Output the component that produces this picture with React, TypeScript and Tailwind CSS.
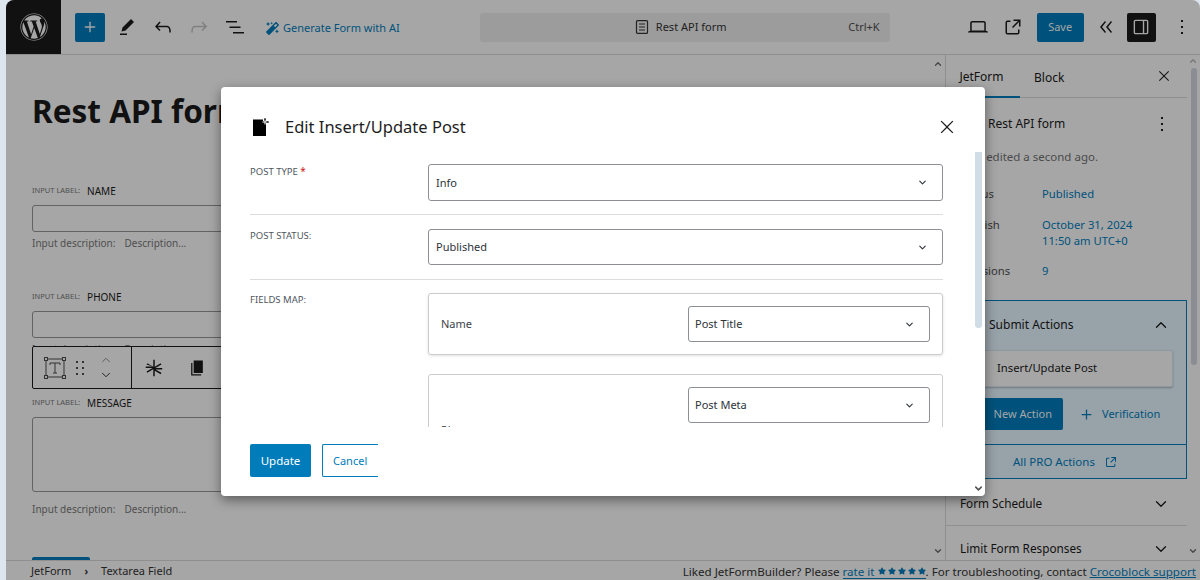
import React from "react";
import { FaWordpress, FaMagic, FaStar } from "react-icons/fa";
import { ChevronDown, ChevronUp, Plus } from "lucide-react";

type IconProps = { d: string; className?: string };

const WpIcon = ({ d, className }: IconProps) => (
  <svg viewBox="0 0 24 24" fill="currentColor" className={className}>
    <path d={d} />
  </svg>
);

const icons = {
  pencil: "m19 7-3-3-8.5 8.5-1 4 4-1L19 7Zm-7 11.5H5V20h7v-1.5Z",
  undo: "M18.3 11.7c-.6-.6-1.4-.9-2.3-.9H6.7l2.9-3.3-1.1-1-4.5 5L8.5 16l1-1-2.7-2.7H16c.5 0 .9.2 1.3.5 1 1 1 3.4 1 4.5v.3h1.5v-.2c0-1.5 0-4.3-1.5-5.7z",
  redo: "M15.6 6.5l-1.1 1 2.9 3.3H8c-.9 0-1.7.3-2.3.9-1.4 1.5-1.4 4.2-1.4 5.6v.2h1.5v-.3c0-1.1 0-3.5 1-4.5.3-.3.7-.5 1.3-.5h9.2L14.5 15l1.1 1.1 4.6-4.6-4.6-5z",
  list: "M3 6h11v1.5H3V6Zm3.5 5.5h11V13h-11v-1.5ZM21 17H10v1.5h11V17Z",
  laptop: "M20.5 16h-.7V8c0-1.1-.9-2-2-2H6.2c-1.1 0-2 .9-2 2v8h-.7c-.8 0-1.5.7-1.5 1.5h20c0-.8-.7-1.5-1.5-1.5zM5.700 8c0-.3.2-.5.5-.5h11.600c.3 0 .5.2.5.5v7.600H5.700V8z",
  external: "M19.5 4.5h-7V6h4.44l-5.97 5.97 1.06 1.06L18 7.06v4.44h1.5v-7Zm-13 1a2 2 0 0 0-2 2v10a2 2 0 0 0 2 2h10a2 2 0 0 0 2-2v-3H17v3a.5.5 0 0 1-.5.5h-10a.5.5 0 0 1-.5-.5v-10a.5.5 0 0 1 .5-.5h3V5.5h-3Z",
  drawer: "M18 4H6c-1.1 0-2 .9-2 2v12c0 1.1.9 2 2 2h12c1.1 0 2-.9 2-2V6c0-1.1-.9-2-2-2zm-4 14.5H6c-.3 0-.5-.2-.5-.5V6c0-.3.2-.5.5-.5h8v13zm4.500-.5c0 .3-.2.5-.5.5h-2.500v-13H18c.3 0 .5.2.5.5v12z",
  dots: "M13 19h-2v-2h2v2zm0-6h-2v-2h2v2zm0-6h-2V5h2v2z",
  close: "m13.06 12 6.47-6.47-1.06-1.06L12 10.94 5.53 4.47 4.47 5.53 10.94 12l-6.47 6.47 1.06 1.06L12 13.06l6.47 6.47 1.06-1.06L13.06 12Z",
  chevrons: "M11 6l-5 6 5 6 1-1-4-5 4-5-1-1Zm6 0l-5 6 5 6 1-1-4-5 4-5-1-1Z",
  copy: "M8 3h11v15H8V3ZM5 6h1.500v13.500H17V21H5V6Z",
  asterisk: "M11.200 3h1.600v7.600l6.500-3.700.8 1.400-6.500 3.700H21v1.600h-7.400l6.500 3.700-.8 1.400-6.500-3.700V21h-1.600v-7.600l-6.500 3.700-.8-1.400 6.500-3.700H3v-1.600h7.400L3.900 8.300l.8-1.400 6.500 3.700V3Z",
};

const Select = ({ value, small, short }: { value: string; small?: boolean; short?: boolean }) => (
  <div className={`flex items-center justify-between border border-[#8c8f94] rounded-[3px] bg-white text-[#2c3338] ${small ? "w-[242px] h-[36px] pl-[6px] pr-[14px]" : `${short ? "h-[36px]" : "h-[37px]"} pl-[7px] pr-[14px]`}`}>
    <span className="pt-[1px] text-[11px]">{value}</span>
    <ChevronDown size={11} strokeWidth={2.5} className="text-[#32373c]" />
  </div>
);

const Field = ({ label, tall, className }: { label: string; tall?: boolean; className?: string }) => (
  <div className={className}>
    <div className="flex items-center h-[12px] gap-[7px]">
      <span className="text-[7.5px] text-[#4e4e4e]">INPUT LABEL:</span>
      <span className="text-[10px] text-[#111]">{label}</span>
    </div>
    <div className={`mt-[8px] border border-[#636363] rounded-[3px] w-[860px] ${tall ? "h-[75px]" : "h-[27px]"}`} />
    <div className={`${tall ? "mt-[9px]" : "mt-[3px]"} flex items-center h-[16px] gap-[9px] text-[10px] text-[#4e4e4e]`}>
      <span>Input description:</span>
      <span>Description...</span>
    </div>
  </div>
);

const MetaRow = ({ label, value, value2, className }: { label: string; value: string; value2?: string; className?: string }) => (
  <div className={`flex text-[11.25px] leading-[16px] ${className ?? ""}`}>
    <span className="w-[81px] text-[#333]">{label}</span>
    <span className="text-[#00527c]">
      {value}
      {value2 && <br />}
      {value2}
    </span>
  </div>
);

const App = () => {
  return (
    <div className="relative w-[1200px] h-[580px] overflow-hidden bg-[#dde5ee] pl-[6px] font-['Noto_Sans',sans-serif]">
      <div className="flex flex-col h-full bg-[#a6a6a6] rounded-tl-[8px] rounded-tr-[8px] overflow-hidden">
        {/* top bar */}
        <header className="flex items-center h-[55px] shrink-0 border-b border-[#8f8f8f] text-[#111]">
          <div className="flex items-center justify-center w-[55px] h-[54px] bg-[#111] text-[#a6a6a6]">
            <FaWordpress size={28} />
          </div>
          <div className="flex items-center justify-center ml-[14px] w-[30px] h-[29px] rounded-[2px] bg-[#00527c] text-[#a6a6a6]">
            <Plus size={16} strokeWidth={2} />
          </div>
          <WpIcon d={icons.pencil} className="ml-[10px] w-[24px] h-[24px]" />
          <WpIcon d={icons.undo} className="ml-[12px] w-[24px] h-[24px]" />
          <WpIcon d={icons.redo} className="ml-[12px] w-[24px] h-[24px] text-[#808080]" />
          <WpIcon d={icons.list} className="ml-[12px] w-[24px] h-[24px]" />
          <div className="flex items-center ml-[19px] pt-[2px] text-[#00527c]">
            <FaMagic size={13} />
            <span className="ml-[4px] text-[11px]">Generate Form with AI</span>
          </div>
          <div className="relative flex items-center justify-center ml-[80px] w-[410px] h-[29px] rounded-[3px] bg-[#9c9c9c] text-[11px] text-[#222]">
            <div className="flex items-center mr-[8px]">
              <svg viewBox="0 0 14 14" fill="none" stroke="currentColor" strokeWidth="1.200" className="w-[14px] h-[14px]">
                <rect x="1.500" y="0.600" width="11" height="12.800" rx="1" />
                <path d="M4 4h6M4 7h6M4 10h6" />
              </svg>
              <span className="ml-[7px]">Rest API form</span>
            </div>
            <span className="absolute right-[10px] text-[#333]">Ctrl+K</span>
          </div>
          <WpIcon d={icons.laptop} className="ml-[76px] w-[24px] h-[24px]" />
          <WpIcon d={icons.external} className="ml-[11px] w-[24px] h-[24px]" />
          <div className="flex items-center justify-center ml-[12px] w-[47px] h-[29px] rounded-[2px] bg-[#00527c] text-[11px] text-[#a6a6a6]">
            Save
          </div>
          <WpIcon d={icons.chevrons} className="ml-[10px] w-[24px] h-[24px]" />
          <div className="flex items-center justify-center ml-[9px] w-[29px] h-[29px] rounded-[2px] bg-[#111] text-[#a6a6a6]">
            <WpIcon d={icons.drawer} className="w-[22px] h-[22px]" />
          </div>
          <WpIcon d={icons.dots} className="ml-[14px] w-[24px] h-[24px]" />
        </header>

        <div className="flex flex-1 min-h-0">
          {/* canvas */}
          <main className="relative flex-1 min-w-0 overflow-hidden pl-[26px]">
            <h1 className="mt-[36px] text-[31.5px] leading-[40px] font-bold text-[#111] whitespace-nowrap">Rest API form</h1>
            <Field label="NAME" className="mt-[54px]" />
            <Field label="PHONE" className="mt-[40px]" />
            <Field label="MESSAGE" tall className="mt-[40px]" />
            <div className="mt-[40px] w-[58px] h-[30px] rounded-[2px] bg-[#00527c]" />

            {/* floating block toolbar */}
            <div className="absolute left-[26px] top-[291px] flex items-center w-[400px] h-[43px] border border-[#111] rounded-[2px] bg-[#a6a6a6] text-[#111]">
              <div className="flex items-center w-[99px] h-full border-r border-[#111]">
                <svg viewBox="0 0 24 24" fill="none" stroke="currentColor" strokeWidth="1" className="ml-[10px] w-[24px] h-[24px] text-[#333]">
                  <rect x="3" y="3" width="18" height="18" />
                  <rect x="1.500" y="1.500" width="3" height="3" fill="#a6a6a6" />
                  <rect x="19.500" y="1.500" width="3" height="3" fill="#a6a6a6" />
                  <rect x="1.500" y="19.500" width="3" height="3" fill="#a6a6a6" />
                  <rect x="19.500" y="19.500" width="3" height="3" fill="#a6a6a6" />
                  <path d="M7 7h10v2M7 7v2M12 7v10M10 17h4" />
                </svg>
                <svg viewBox="0 0 8 14" fill="currentColor" className="ml-[9px] w-[8px] h-[14px] text-[#333]">
                  <rect x="0" y="0" width="2" height="2" />
                  <rect x="6" y="0" width="2" height="2" />
                  <rect x="0" y="6" width="2" height="2" />
                  <rect x="6" y="6" width="2" height="2" />
                  <rect x="0" y="12" width="2" height="2" />
                  <rect x="6" y="12" width="2" height="2" />
                </svg>
                <div className="ml-[15px] flex flex-col gap-[1px]">
                  <ChevronUp size={14} strokeWidth={1.5} className="text-[#555]" />
                  <ChevronDown size={14} strokeWidth={1.5} />
                </div>
              </div>
              <WpIcon d={icons.asterisk} className="ml-[11px] w-[22px] h-[22px]" />
              <WpIcon d={icons.copy} className="ml-[22px] w-[20px] h-[20px]" />
            </div>

            {/* canvas scrollbar arrows */}
            <ChevronUp size={10} strokeWidth={3} className="absolute right-[2px] top-[4px] text-[#444]" />
            <ChevronDown size={10} strokeWidth={3} className="absolute right-[2px] bottom-[4px] text-[#444]" />
          </main>

          {/* settings sidebar */}
          <aside className="relative flex shrink-0 w-[255px] border-l border-[#8f8f8f]">
            <div className="w-[241px] text-[#111]">
              <div className="relative flex items-center h-[43px] border-b border-[#8f8f8f] text-[12px]">
                <div className="flex items-center justify-center w-[74px] h-full pt-[3px] pr-[3px] border-b-2 border-[#00527c] -mb-px">JetForm</div>
                <span className="ml-[14px] pt-[3px]">Block</span>
                <WpIcon d={icons.close} className="absolute right-[15px] top-[13px] w-[16px] h-[16px]" />
              </div>
              <div className="relative mt-[18px] h-[16px] pl-[42px] text-[12px] leading-[16px]">
                Rest API form
                <WpIcon d={icons.dots} className="absolute right-[13px] top-[-4px] w-[24px] h-[24px]" />
              </div>
              <div className="mt-[17px] pl-[15px] text-[11.5px] leading-[16px] text-[#4a4a4a]">Last edited a second ago.</div>
              <MetaRow label="Status" value="Published" className="mt-[21px] pl-[15px]" />
              <MetaRow label="Publish" value="October 31, 2024" value2="11:50 am UTC+0" className="mt-[15px] pl-[15px]" />
              <MetaRow label="Revisions" value="9" className="mt-[14px] pl-[15px]" />

              <section className="mt-[21px] h-[179px] border border-[#00527c] bg-[#98a2a9] text-[12px]">
                <div className="relative flex items-center h-[49px] pl-[42px] pb-[2px]">
                  Submit Actions
                  <ChevronUp size={18} strokeWidth={1.75} className="absolute right-[16px]" />
                </div>
                <div className="ml-[12px] w-[214px] h-[37px] flex items-center pl-[37px] text-[11.25px] bg-[#a6a6a6] border border-[#8e99a1] rounded-[2px] shadow-[0_1px_2px_rgba(0,0,0,0.25)]">
                  Insert/Update Post
                </div>
                <div className="mt-[11px] flex items-center ml-[12px] text-[11px]">
                  <div className="flex items-center justify-end w-[104px] h-[32px] pt-[1px] pr-[11px] rounded-[2px] bg-[#00527c] text-[#a6a6a6]">New Action</div>
                  <Plus size={15} strokeWidth={2} className="ml-[16px] text-[#00527c]" />
                  <span className="ml-[8px] pt-[1px] text-[#00527c]">Verification</span>
                </div>
                <div className="mt-[14px] flex items-center h-[33px] pt-[1px] border-t border-[#00527c] pl-[66px] text-[11.5px] text-[#00527c]">
                  All PRO Actions
                  <WpIcon d={icons.external} className="ml-[8px] w-[16px] h-[16px]" />
                </div>
              </section>

              <div className="flex items-center justify-between h-[47px] pt-[4px] pl-[14px] pr-[17px] border-b border-[#8f8f8f] text-[11.75px]">
                Form Schedule
                <ChevronDown size={18} strokeWidth={1.75} />
              </div>
              <div className="flex items-center justify-between h-[45px] pl-[14px] pr-[17px] text-[11.75px]">
                Limit Form Responses
                <ChevronDown size={18} strokeWidth={1.75} />
              </div>
            </div>
            <div className="relative flex-1">
              <ChevronUp size={10} strokeWidth={3} className="absolute left-[1px] top-[1px] text-[#777]" />
              <div className="mx-auto mt-[13px] w-[6px] h-[297px] rounded-full bg-[#8a8d93]" />
              <ChevronDown size={10} strokeWidth={3} className="absolute left-[1px] bottom-[4px] text-[#444]" />
            </div>
          </aside>
        </div>

        {/* status bar */}
        <footer className="flex items-center justify-between shrink-0 h-[20px] pt-[2px] pl-[25px] pr-[4px] border-t border-[#8f8f8f] text-[#222]">
          <div className="flex items-center text-[11px]">
            <span>JetForm</span>
            <span className="mx-[13px] text-[10px] font-bold">›</span>
            <span>Textarea Field</span>
          </div>
          <div className="flex items-center text-[11.6px]">
            <span>Liked JetFormBuilder? Please&nbsp;</span>
            <span className="flex items-center text-[#00527c] border-b border-[#00527c] leading-[13px]">
              rate it&nbsp;
              <FaStar size={8} className="mr-[2px]" />
              <FaStar size={8} className="mr-[2px]" />
              <FaStar size={8} className="mr-[2px]" />
              <FaStar size={8} className="mr-[2px]" />
              <FaStar size={8} />
            </span>
            <span>. For troubleshooting, contact&nbsp;</span>
            <span className="text-[#00527c] underline">Crocoblock support</span>
          </div>
        </footer>
      </div>

      {/* modal */}
      <div className="absolute left-[221px] top-[87px] flex flex-col w-[764px] h-[409px] rounded-[4px] bg-white shadow-[0_4px_12px_rgba(0,0,0,0.45)]">
        <div className="relative flex items-center h-[65px] shrink-0 pl-[32px] pt-[15px]">
          <svg viewBox="0 0 16 18" className="w-[16px] h-[18px]">
            <path d="M0 1.500h10V5h3v13H0V1.500Z" fill="#000" />
            <path d="M11 0.500h2v2.500h2.500v2H13v2.500h-2V5H8.500V3H11V0.500Z" fill="#000" />
            <path d="M11.500 1.500h1V3.500h2v1h-2v2h-1v-2h-2v-1h2V1.500Z" fill="#fff" />
          </svg>
          <span className="ml-[16px] text-[16.5px] text-[#1e1e1e]">Edit Insert/Update Post</span>
          <WpIcon d={icons.close} className="absolute right-[28px] top-[30px] w-[20px] h-[20px] text-[#1e1e1e]" />
        </div>

        <div className="flex flex-1 min-h-0">
          <div className="flex-1 min-w-0 h-[275px] overflow-hidden pl-[29px] pt-[12px]">
            <div className="w-[693px]">
              <div className="flex pb-[13px] border-b border-[#dcdcde]">
                <div className="w-[178px] pt-[1px] text-[9.5px] leading-[12px] text-[#50575e]">
                  POST TYPE <span className="text-[#cc1818] text-[10px]">*</span>
                </div>
                <div className="flex-1">
                  <Select value="Info" />
                </div>
              </div>
              <div className="flex pt-[14px] pb-[14px] border-b border-[#dcdcde]">
                <div className="w-[178px] pt-[1px] text-[9.5px] leading-[12px] text-[#50575e]">POST STATUS:</div>
                <div className="flex-1">
                  <Select value="Published" short />
                </div>
              </div>
              <div className="flex pt-[13px]">
                <div className="w-[178px] pt-[1px] text-[9.5px] leading-[12px] text-[#50575e]">FIELDS MAP:</div>
                <div className="flex-1">
                  <div className="flex items-center justify-between h-[62px] pl-[12px] pr-[12px] border border-[#ccc] rounded-[3px] shadow-[0_1px_3px_rgba(0,0,0,0.12)]">
                    <span className="text-[11px] text-[#3c434a]">Name</span>
                    <Select value="Post Title" small />
                  </div>
                  <div className="flex items-start justify-between h-[90px] mt-[19px] pl-[12px] pr-[12px] pt-[12px] border border-[#ccc] rounded-[3px]">
                    <span className="mt-[35px] text-[11px] text-[#3c434a]">Phone</span>
                    <Select value="Post Meta" small />
                  </div>
                </div>
              </div>
            </div>
          </div>
          <div className="relative w-[14px] mr-[3px] shrink-0">
            <div className="ml-auto w-[7px] h-[176px] rounded-b-full bg-[#d0dce6]" />
            <ChevronDown size={11} strokeWidth={3.5} className="absolute left-[5px] top-[331px] text-[#555]" />
          </div>
        </div>

        <div className="absolute left-[29px] top-[357px] flex items-center gap-[11px]">
          <div className="flex items-center justify-center w-[61px] h-[33px] pt-[1px] rounded-[2px] bg-[#007cba] text-[11.5px] text-white">Update</div>
          <div className="flex items-center w-[56px] h-[33px] pl-[10px] pt-[1px] border border-r-0 border-[#007cba] rounded-l-[2px] text-[11px] text-[#007cba]">Cancel</div>
        </div>
      </div>
    </div>
  );
};

export default App;
